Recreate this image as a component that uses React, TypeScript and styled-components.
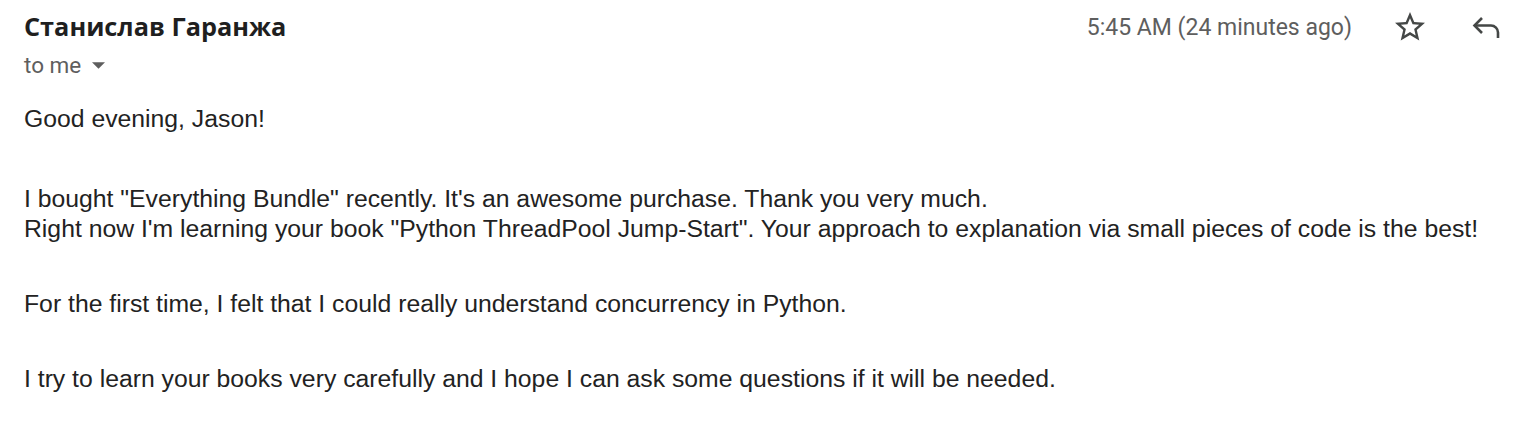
import React from 'react';
import styled, { createGlobalStyle } from 'styled-components';

const Global = createGlobalStyle`
  body {
    margin: 0;
    background: #ffffff;
    font-family: "Liberation Sans", Arial, sans-serif;
  }
`;

const Page = styled.div`
  width: 1536px;
  height: 435px;
  padding: 9px 24px 0 24px;
  box-sizing: border-box;
`;

const Header = styled.div`
  display: flex;
  align-items: flex-start;
  justify-content: space-between;
`;

const Sender = styled.div`
  display: flex;
  flex-direction: column;
`;

const Name = styled.span`
  font-family: "Open Sans", Roboto, sans-serif;
  font-weight: 700;
  font-size: 25.3px;
  line-height: 34px;
  color: #1f1f1f;
`;

const Recipient = styled.div`
  display: flex;
  align-items: center;
  gap: 11px;
  margin-top: 8px;
  font-family: Roboto, "Liberation Sans", sans-serif;
  font-size: 22.5px;
  color: #5e5e5e;
  line-height: 28px;
`;

const Meta = styled.div`
  display: flex;
  align-items: center;
  height: 36px;
  margin-right: 5px;
`;

const Time = styled.span`
  font-family: Roboto, "Liberation Sans", sans-serif;
  font-size: 23px;
  color: #5e5e5e;
  margin-right: 38px;
`;

const IconButton = styled.span<{ $gap?: number }>`
  display: flex;
  align-items: center;
  justify-content: center;
  width: 40px;
  height: 40px;
  margin-left: ${(p) => p.$gap ?? 0}px;
  color: #444746;
`;

const Body = styled.div`
  margin-top: 25px;
  font-size: 24.75px;
  line-height: 30px;
  color: #222222;
`;

const Para = styled.p<{ $after?: number }>`
  margin: 0 0 ${(p) => p.$after ?? 45}px 0;
`;

const Star = () => (
  <svg width="36" height="36" viewBox="0 0 24 24" fill="currentColor">
    <path d="M22 9.24l-7.19-.62L12 2 9.19 8.63 2 9.24l5.46 4.73L5.82 21 12 17.27 18.18 21l-1.63-7.03L22 9.24zM12 15.4l-3.76 2.27 1-4.28-3.32-2.88 4.38-.38L12 6.1l1.71 4.04 4.38.38-3.32 2.88 1 4.28L12 15.4z" />
  </svg>
);

const Reply = () => (
  <svg width="30" height="24" viewBox="0 0 30 24" fill="none" stroke="currentColor" strokeWidth="2.6">
    <path d="M10 3 L2.5 10.5 L10 18" strokeLinejoin="miter" />
    <path d="M2.5 10.5 H19 A7 7 0 0 1 26 17.5 V23" />
  </svg>
);

const Caret = () => (
  <svg width="13" height="7" viewBox="0 0 10 5">
    <path d="M0 0l5 5 5-5z" fill="#5e5e5e" />
  </svg>
);

export default function App() {
  return (
    <Page>
      <Global />
      <Header>
        <Sender>
          <Name>Станислав Гаранжа</Name>
          <Recipient>
            to me
            <Caret />
          </Recipient>
        </Sender>
        <Meta>
          <Time>5:45 AM (24 minutes ago)</Time>
          <IconButton><Star /></IconButton>
          <IconButton $gap={37}><Reply /></IconButton>
        </Meta>
      </Header>
      <Body>
        <Para $after={50}>Good evening, Jason!</Para>
        <Para>
          I bought "Everything Bundle" recently. It's an awesome purchase. Thank you very much.
          <br />
          Right now I'm learning your book "Python ThreadPool Jump-Start". Your approach to explanation via small pieces of code is the best!
        </Para>
        <Para>For the first time, I felt that I could really understand concurrency in Python.</Para>
        <Para>I try to learn your books very carefully and I hope I can ask some questions if it will be needed.</Para>
      </Body>
    </Page>
  );
}
